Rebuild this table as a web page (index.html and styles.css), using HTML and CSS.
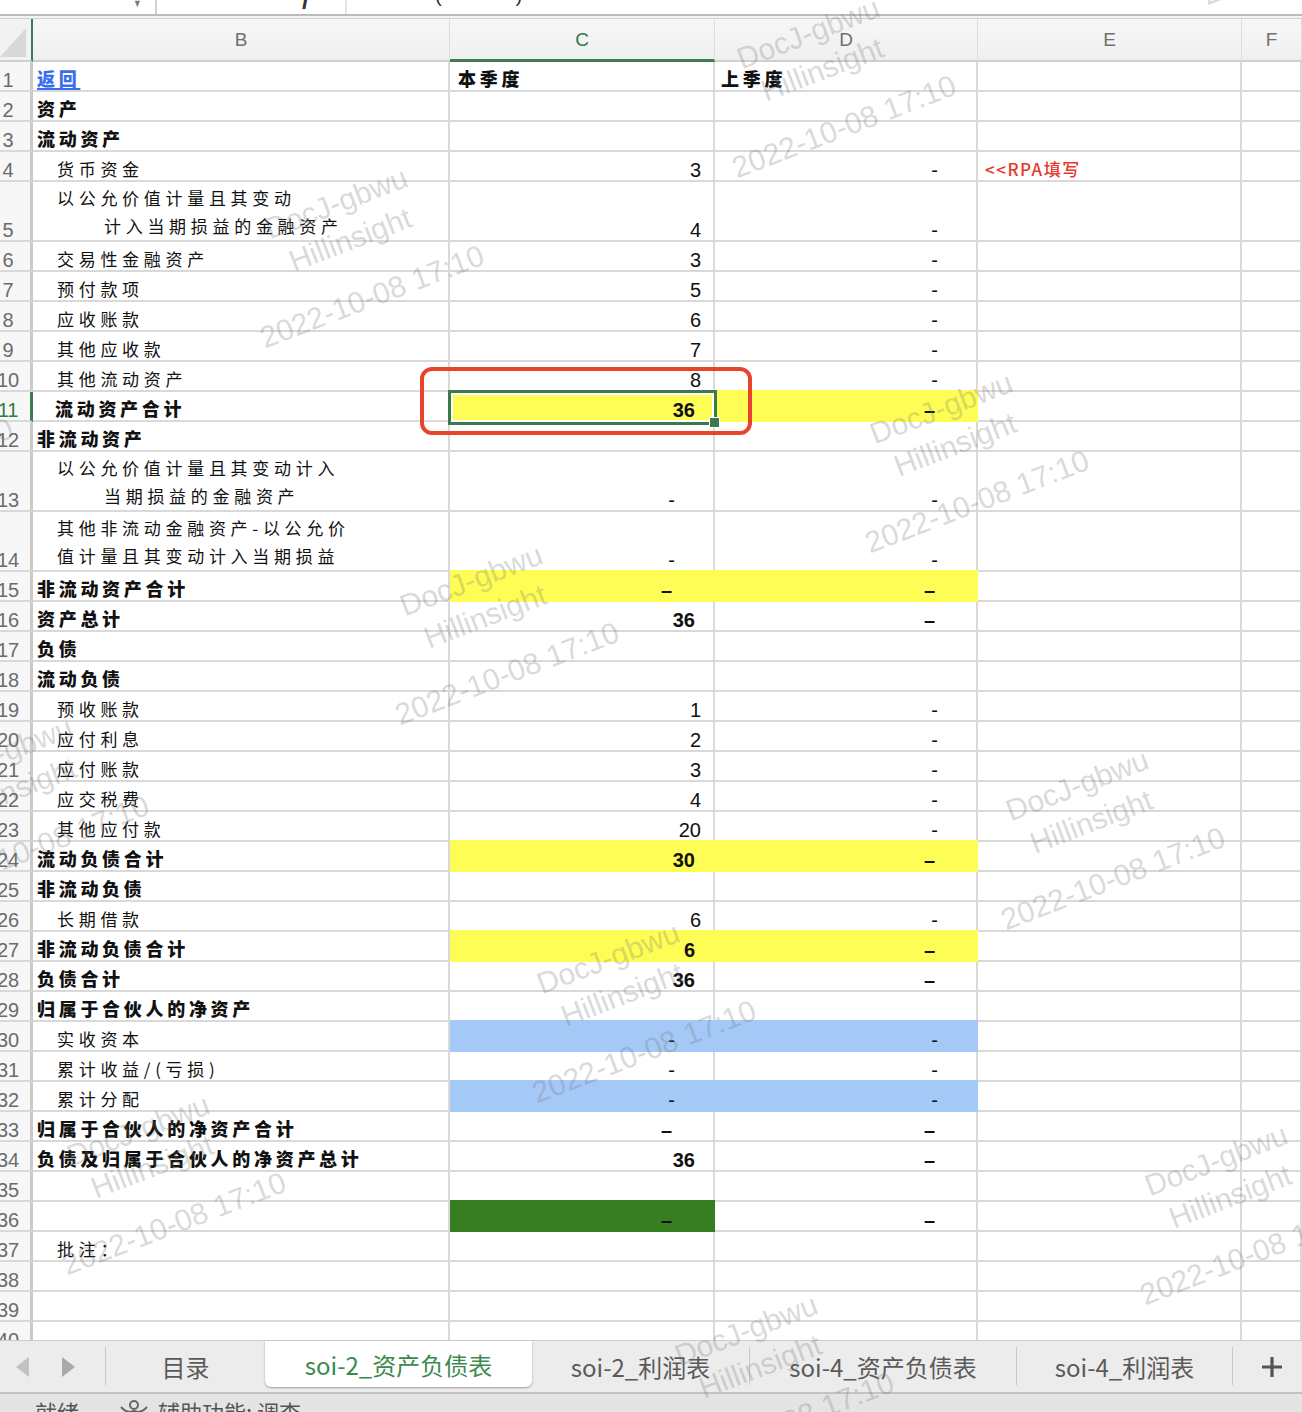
FILE: index.html
```html
<!DOCTYPE html>
<html lang="zh">
<head>
<meta charset="utf-8">
<title>soi-2_资产负债表</title>
<link rel="stylesheet" href="styles.css">
</head>
<body>
<div class="page">
  <div class="formula">
    <div class="namebox"><span class="caret">▼</span></div>
    <div class="fx"><span class="fxg">ƒ</span></div>
    <div class="ftext"><span class="p1">(</span><span class="p2">)</span></div>
  </div>
  <div class="rule"></div>
  <div class="colhead">
    <div class="corner"><div class="tri"></div></div>
    <div class="ch">B</div>
    <div class="ch sel">C</div>
    <div class="ch">D</div>
    <div class="ch">E</div>
    <div class="ch">F</div>
  </div>

  <div class="sheet">
    <div class="row"><div class="rh"><span>1</span></div><div class="c t b"><span class="link">返回</span></div><div class="c t b hc">本季度</div><div class="c t b hd">上季度</div><div class="c"></div><div class="c"></div></div>
    <div class="row"><div class="rh"><span>2</span></div><div class="c t b">资产</div><div class="c"></div><div class="c"></div><div class="c"></div><div class="c"></div></div>
    <div class="row"><div class="rh"><span>3</span></div><div class="c t b">流动资产</div><div class="c"></div><div class="c"></div><div class="c"></div><div class="c"></div></div>
    <div class="row"><div class="rh"><span>4</span></div><div class="c t">货币资金</div><div class="c num n">3</div><div class="c num dz">-</div><div class="c t rpa">&lt;&lt;RPA填写</div><div class="c"></div></div>
    <div class="row tall"><div class="rh"><span>5</span></div><div class="c t"><span class="ln">以公允价值计量且其变动</span><span class="ln ln2">计入当期损益的金融资产</span></div><div class="c num n">4</div><div class="c num dz">-</div><div class="c"></div><div class="c"></div></div>
    <div class="row"><div class="rh"><span>6</span></div><div class="c t">交易性金融资产</div><div class="c num n">3</div><div class="c num dz">-</div><div class="c"></div><div class="c"></div></div>
    <div class="row"><div class="rh"><span>7</span></div><div class="c t">预付款项</div><div class="c num n">5</div><div class="c num dz">-</div><div class="c"></div><div class="c"></div></div>
    <div class="row"><div class="rh"><span>8</span></div><div class="c t">应收账款</div><div class="c num n">6</div><div class="c num dz">-</div><div class="c"></div><div class="c"></div></div>
    <div class="row"><div class="rh"><span>9</span></div><div class="c t">其他应收款</div><div class="c num n">7</div><div class="c num dz">-</div><div class="c"></div><div class="c"></div></div>
    <div class="row"><div class="rh"><span>10</span></div><div class="c t">其他流动资产</div><div class="c num n">8</div><div class="c num dz">-</div><div class="c"></div><div class="c"></div></div>
    <div class="row"><div class="rh act"><span>11</span></div><div class="c t b ind">流动资产合计</div><div class="c num nb yel">36</div><div class="c num dzb yel">–</div><div class="c"></div><div class="c"></div></div>
    <div class="row"><div class="rh"><span>12</span></div><div class="c t b">非流动资产</div><div class="c"></div><div class="c"></div><div class="c"></div><div class="c"></div></div>
    <div class="row tall"><div class="rh"><span>13</span></div><div class="c t"><span class="ln">以公允价值计量且其变动计入</span><span class="ln ln2">当期损益的金融资产</span></div><div class="c num dz">-</div><div class="c num dz">-</div><div class="c"></div><div class="c"></div></div>
    <div class="row tall"><div class="rh"><span>14</span></div><div class="c t"><span class="ln">其他非流动金融资产-以公允价</span><span class="ln">值计量且其变动计入当期损益</span></div><div class="c num dz">-</div><div class="c num dz">-</div><div class="c"></div><div class="c"></div></div>
    <div class="row"><div class="rh"><span>15</span></div><div class="c t b">非流动资产合计</div><div class="c num dzb yel">–</div><div class="c num dzb yel">–</div><div class="c"></div><div class="c"></div></div>
    <div class="row"><div class="rh"><span>16</span></div><div class="c t b">资产总计</div><div class="c num nb">36</div><div class="c num dzb">–</div><div class="c"></div><div class="c"></div></div>
    <div class="row"><div class="rh"><span>17</span></div><div class="c t b">负债</div><div class="c"></div><div class="c"></div><div class="c"></div><div class="c"></div></div>
    <div class="row"><div class="rh"><span>18</span></div><div class="c t b">流动负债</div><div class="c"></div><div class="c"></div><div class="c"></div><div class="c"></div></div>
    <div class="row"><div class="rh"><span>19</span></div><div class="c t">预收账款</div><div class="c num n">1</div><div class="c num dz">-</div><div class="c"></div><div class="c"></div></div>
    <div class="row"><div class="rh"><span>20</span></div><div class="c t">应付利息</div><div class="c num n">2</div><div class="c num dz">-</div><div class="c"></div><div class="c"></div></div>
    <div class="row"><div class="rh"><span>21</span></div><div class="c t">应付账款</div><div class="c num n">3</div><div class="c num dz">-</div><div class="c"></div><div class="c"></div></div>
    <div class="row"><div class="rh"><span>22</span></div><div class="c t">应交税费</div><div class="c num n">4</div><div class="c num dz">-</div><div class="c"></div><div class="c"></div></div>
    <div class="row"><div class="rh"><span>23</span></div><div class="c t">其他应付款</div><div class="c num n">20</div><div class="c num dz">-</div><div class="c"></div><div class="c"></div></div>
    <div class="row"><div class="rh"><span>24</span></div><div class="c t b">流动负债合计</div><div class="c num nb yel">30</div><div class="c num dzb yel">–</div><div class="c"></div><div class="c"></div></div>
    <div class="row"><div class="rh"><span>25</span></div><div class="c t b">非流动负债</div><div class="c"></div><div class="c"></div><div class="c"></div><div class="c"></div></div>
    <div class="row"><div class="rh"><span>26</span></div><div class="c t">长期借款</div><div class="c num n">6</div><div class="c num dz">-</div><div class="c"></div><div class="c"></div></div>
    <div class="row"><div class="rh"><span>27</span></div><div class="c t b">非流动负债合计</div><div class="c num nb yel">6</div><div class="c num dzb yel">–</div><div class="c"></div><div class="c"></div></div>
    <div class="row"><div class="rh"><span>28</span></div><div class="c t b">负债合计</div><div class="c num nb">36</div><div class="c num dzb">–</div><div class="c"></div><div class="c"></div></div>
    <div class="row"><div class="rh"><span>29</span></div><div class="c t b">归属于合伙人的净资产</div><div class="c"></div><div class="c"></div><div class="c"></div><div class="c"></div></div>
    <div class="row"><div class="rh"><span>30</span></div><div class="c t">实收资本</div><div class="c num dz blu">-</div><div class="c num dz blu">-</div><div class="c"></div><div class="c"></div></div>
    <div class="row"><div class="rh"><span>31</span></div><div class="c t">累计收益/(亏损)</div><div class="c num dz">-</div><div class="c num dz">-</div><div class="c"></div><div class="c"></div></div>
    <div class="row"><div class="rh"><span>32</span></div><div class="c t">累计分配</div><div class="c num dz blu">-</div><div class="c num dz blu">-</div><div class="c"></div><div class="c"></div></div>
    <div class="row"><div class="rh"><span>33</span></div><div class="c t b">归属于合伙人的净资产合计</div><div class="c num dzb">–</div><div class="c num dzb">–</div><div class="c"></div><div class="c"></div></div>
    <div class="row"><div class="rh"><span>34</span></div><div class="c t b">负债及归属于合伙人的净资产总计</div><div class="c num nb">36</div><div class="c num dzb">–</div><div class="c"></div><div class="c"></div></div>
    <div class="row"><div class="rh"><span>35</span></div><div class="c"></div><div class="c"></div><div class="c"></div><div class="c"></div><div class="c"></div></div>
    <div class="row"><div class="rh"><span>36</span></div><div class="c"></div><div class="c num dzb grn">–</div><div class="c num dzb">–</div><div class="c"></div><div class="c"></div></div>
    <div class="row"><div class="rh"><span>37</span></div><div class="c t">批注：</div><div class="c"></div><div class="c"></div><div class="c"></div><div class="c"></div></div>
    <div class="row"><div class="rh"><span>38</span></div><div class="c"></div><div class="c"></div><div class="c"></div><div class="c"></div><div class="c"></div></div>
    <div class="row"><div class="rh"><span>39</span></div><div class="c"></div><div class="c"></div><div class="c"></div><div class="c"></div><div class="c"></div></div>
    <div class="row"><div class="rh"><span>40</span></div><div class="c"></div><div class="c"></div><div class="c"></div><div class="c"></div><div class="c"></div></div>
  </div>

  <div class="tabs">
    <div class="nav"><span class="arr left"></span><span class="arr right"></span></div>
    <div class="sep"></div>
    <div class="tab w1">目录</div>
    <div class="tab active">soi-2_资产负债表</div>
    <div class="tab w3">soi-2_利润表</div>
    <div class="sep"></div>
    <div class="tab w4">soi-4_资产负债表</div>
    <div class="sep"></div>
    <div class="tab w5">soi-4_利润表</div>
    <div class="sep"></div>
    <div class="tab plus"><svg width="22" height="22" viewBox="0 0 22 22"><path d="M11 1V21M1 11H21" stroke="#555" stroke-width="3.2"/></svg></div>
  </div>
  <div class="status">
    <span class="st1">就绪</span>
    <svg class="acc" width="32" height="20" viewBox="0 0 32 20"><circle cx="16" cy="6" r="4" fill="none" stroke="#666" stroke-width="2"/><path d="M3 8 Q9 15 16 12 Q23 15 29 8" fill="none" stroke="#666" stroke-width="2"/></svg>
    <span class="st2">辅助功能: 调查</span>
  </div>

  <div class="redbox"></div>
  <div class="selbox"></div>
  <div class="handle"></div>

  <div class="wm wm0"><div>DocJ-gbwu</div><div>Hillinsight</div><div class="d">2022-10-08 17:10</div></div>
  <div class="wm wm1"><div>DocJ-gbwu</div><div>Hillinsight</div><div class="d">2022-10-08 17:10</div></div>
  <div class="wm wm2"><div>DocJ-gbwu</div><div>Hillinsight</div><div class="d">2022-10-08 17:10</div></div>
  <div class="wm wm3"><div>DocJ-gbwu</div><div>Hillinsight</div><div class="d">2022-10-08 17:10</div></div>
  <div class="wm wm4"><div>DocJ-gbwu</div><div>Hillinsight</div><div class="d">2022-10-08 17:10</div></div>
  <div class="wm wm5"><div>DocJ-gbwu</div><div>Hillinsight</div><div class="d">2022-10-08 17:10</div></div>
  <div class="wm wm6"><div>DocJ-gbwu</div><div>Hillinsight</div><div class="d">2022-10-08 17:10</div></div>
  <div class="wm wm7"><div>DocJ-gbwu</div><div>Hillinsight</div><div class="d">2022-10-08 17:10</div></div>
  <div class="wm wm8"><div>DocJ-gbwu</div><div>Hillinsight</div><div class="d">2022-10-08 17:10</div></div>
  <div class="wm wm9"><div>DocJ-gbwu</div><div>Hillinsight</div><div class="d">2022-10-08 17:10</div></div>
  <div class="wm wm10"><div>DocJ-gbwu</div><div>Hillinsight</div><div class="d">2022-10-08 17:10</div></div>
  <div class="wm wm11"><div>DocJ-gbwu</div><div>Hillinsight</div><div class="d">2022-10-08 17:10</div></div>
</div>
</body>
</html>
```

FILE: styles.css
```css
* { box-sizing: border-box; }
html, body { margin: 0; padding: 0; }
body {
  width: 1302px;
  height: 1412px;
  overflow: hidden;
  background: #fff;
  font-family: "Liberation Sans", "Noto Sans CJK SC", sans-serif;
}
.page {
  position: relative;
  width: 1302px;
  height: 1412px;
  overflow: hidden;
}

/* formula bar strip (cut at top) */
.formula {
  height: 14px;
  display: flex;
  background: #fff;
  overflow: hidden;
}
.namebox {
  width: 157px;
  border-right: 2px solid #d2d2d2;
  display: flex;
  justify-content: flex-end;
  align-items: flex-start;
  padding-right: 12px;
}
.caret {
  font-size: 11px;
  color: #7a7a7a;
  margin-top: -3px;
  transform: scaleX(0.8);
}
.fx {
  width: 190px;
  border-right: 2px solid #e6e6e6;
  padding-left: 143px;
}
.fxg {
  display: block;
  font-size: 22px;
  font-style: italic;
  font-weight: 700;
  color: #333;
  margin-top: -16px;
}
.ftext {
  flex: 1;
  display: flex;
  font-size: 20px;
  color: #333;
}
.p1 { margin-left: 88px; margin-top: -16px; }
.p2 { margin-left: 74px; margin-top: -16px; }

.rule {
  height: 5px;
  border-top: 2px solid #bcbcbc;
  border-bottom: 1px solid #d0d0d0;
  background: #f4f4f4;
}

/* column header */
.colhead {
  display: grid;
  grid-template-columns: 33px 417px 265px 263px 264px 60px;
  height: 43px;
  background: linear-gradient(#f7f7f7, #efefef);
}
.corner {
  border-right: 2px solid #3e7b4f;
  border-bottom: 2px solid #cfcfcf;
  display: flex;
  justify-content: flex-end;
  align-items: flex-end;
  padding: 0 5px 3px 0;
  background: #f2f2f2;
}
.tri {
  width: 0;
  height: 0;
  border-left: 26px solid transparent;
  border-bottom: 29px solid #d8d8d8;
}
.ch {
  display: flex;
  align-items: center;
  justify-content: center;
  font-size: 19px;
  color: #707070;
  border-right: 1px solid #dddddd;
  border-bottom: 2px solid #cfcfcf;
  padding-top: 1px;
}
.ch.sel {
  color: #2f7a45;
  border-bottom: 3px solid #3e7b4f;
}

/* sheet grid */
.sheet {
  height: 1278px;
  overflow: hidden;
}
.row {
  display: grid;
  grid-template-columns: 33px 417px 265px 263px 264px 60px;
  height: 30px;
}
.row.tall { height: 60px; }
.rh {
  background: #f7f7f7;
  border-right: 3px solid #c9c9c9;
  border-bottom: 2px solid #d9d9d9;
  display: flex;
  align-items: flex-end;
  overflow: hidden;
}
.rh span {
  width: 16px;
  flex: none;
  display: flex;
  justify-content: center;
  font-size: 20px;
  line-height: 20px;
  color: #6b6b6b;
  white-space: nowrap;
}
.rh.act { border-right-color: #3e7b4f; }
.rh.act span { color: #2f7a45; }

.c {
  border-right: 2px solid #d9d9d9;
  border-bottom: 2px solid #d9d9d9;
  display: flex;
  flex-direction: column;
  justify-content: flex-end;
  overflow: hidden;
  white-space: nowrap;
}

/* text cells */
.t {
  font-family: "Noto Sans CJK SC", sans-serif;
  font-size: 17px;
  letter-spacing: 4.7px;
  line-height: 23px;
  color: #111;
  padding-left: 24px;
}
.t.b {
  font-weight: 900;
  font-size: 18px;
  letter-spacing: 3.7px;
  padding-left: 4px;
}
.t.b.ind { padding-left: 22px; }
.t.b.hc { padding-left: 8px; }
.t.b.hd { padding-left: 6px; }
.tall .t { line-height: 28px; }
.ln { display: block; }
.ln2 { padding-left: 47px; }
.link {
  color: #3a6ef0;
  text-decoration: underline;
  text-decoration-thickness: 2px;
  text-underline-offset: 2px;
}
.t.rpa {
  color: #e5382c;
  font-size: 17px;
  font-weight: 500;
  letter-spacing: 1.5px;
  padding-left: 7px;
}

/* number cells */
.num {
  align-items: flex-end;
  font-size: 20px;
  line-height: 20px;
  color: #111;
}
.n { padding-right: 12px; }
.nb { padding-right: 18px; font-weight: 700; }
.dz { padding-right: 38px; }
.dzb { padding-right: 41px; font-weight: 700; }

.yel {
  background: #fdfd55;
  border-right-color: #fdfd55;
  border-bottom-color: #fdfd55;
  box-shadow: 0 -2px 0 #fdfd55;
}
.blu {
  background: #a5c9f7;
  border-right-color: #a5c9f7;
  border-bottom-color: #a5c9f7;
  box-shadow: 0 -2px 0 #a5c9f7;
}
.grn {
  background: #377d22;
  border-right-color: #377d22;
  border-bottom-color: #377d22;
  box-shadow: 0 -2px 0 #377d22;
}

/* sheet tabs */
.tabs {
  height: 52px;
  display: flex;
  background: #ececec;
  border-top: 1px solid #cccccc;
  font-family: "Noto Sans CJK SC", sans-serif;
  font-size: 24px;
  color: #5a5a5a;
}
.nav {
  width: 105px;
  display: flex;
  align-items: center;
  padding-left: 16px;
  gap: 33px;
}
.arr {
  width: 0;
  height: 0;
  border-top: 10px solid transparent;
  border-bottom: 10px solid transparent;
}
.arr.left { border-right: 13px solid #c2c2c2; }
.arr.right { border-left: 13px solid #a9a9a9; }
.sep {
  width: 1px;
  margin: 6px 0 7px;
  background: #c9c9c9;
}
.tab {
  display: flex;
  align-items: center;
  justify-content: center;
  white-space: nowrap;
}
.w1 { width: 159px; }
.active {
  width: 267px;
  background: #fff;
  color: #3c8a4e;
  margin-bottom: 5px;
  border-radius: 0 0 6px 6px;
  box-shadow: 0 1px 2px rgba(0, 0, 0, 0.35);
}
.w3 { width: 217px; }
.w4 { width: 266px; }
.w5 { width: 215px; }
.plus { flex: 1; padding-left: 9px; }
.plus svg { display: block; }

/* status bar */
.status {
  height: 20px;
  background: #e4e4e4;
  border-top: 2px solid #c3c3c3;
  display: flex;
  align-items: flex-start;
  overflow: hidden;
  font-family: "Noto Sans CJK SC", sans-serif;
  font-size: 22px;
  color: #555;
  padding-left: 35px;
  padding-top: 1px;
  white-space: nowrap;
}
.st1 { display: block; }
.acc { margin: 4px 0 0 39px; flex: none; }
.st2 { margin-left: 8px; }

/* selection overlays */
.redbox {
  position: absolute;
  left: 420px;
  top: 367px;
  width: 332px;
  height: 68px;
  border: 4px solid #e8432c;
  border-radius: 12px;
}
.selbox {
  position: absolute;
  left: 448px;
  top: 390px;
  width: 269px;
  height: 35px;
  border: 3px solid #3b7a4d;
  box-shadow: inset 0 0 0 2px #fff;
}
.handle {
  position: absolute;
  left: 709px;
  top: 417px;
  width: 11px;
  height: 11px;
  background: #3b7a4d;
  border: 1px solid #fff;
}

/* watermarks */
.wm {
  position: absolute;
  width: 300px;
  height: 139px;
  margin-left: -150px;
  margin-top: -70px;
  transform: rotate(-21deg);
  text-align: center;
  font-family: "Liberation Sans", sans-serif;
  font-size: 30px;
  line-height: 39px;
  color: rgba(110, 110, 110, 0.27);
  white-space: nowrap;
  pointer-events: none;
}
.wm .d { margin-top: 22px; }
.wm0 { left: 1296px; top: -93px; }
.wm1 { left: 826px; top: 80px; }
.wm2 { left: 354px; top: 250px; }
.wm3 { left: 959px; top: 455px; }
.wm4 { left: 489px; top: 627px; }
.wm5 { left: 1095px; top: 832px; }
.wm6 { left: 626px; top: 1005px; }
.wm7 { left: 156px; top: 1177px; }
.wm8 { left: 1234px; top: 1207px; }
.wm9 { left: 764px; top: 1377px; }
.wm10 { left: 19px; top: 800px; }
.wm11 { left: -117px; top: 423px; }
```
